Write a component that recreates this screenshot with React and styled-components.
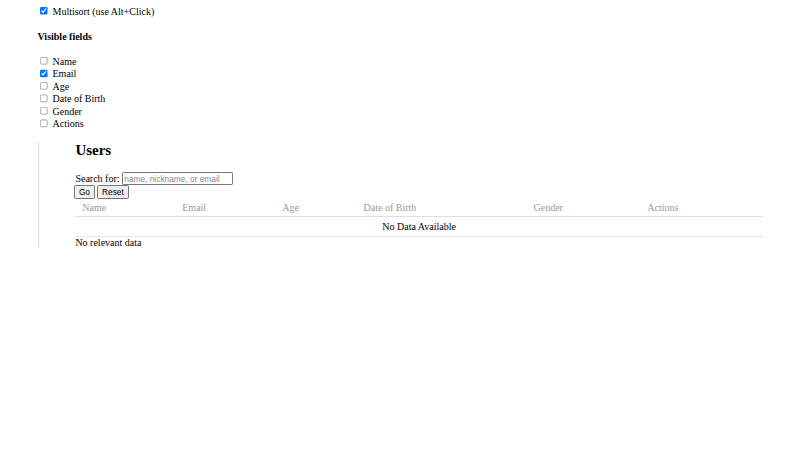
import React, { useState } from 'react'
import styled, { createGlobalStyle } from 'styled-components'

const GlobalStyle = createGlobalStyle`
  body {
    margin: 5px;
    font-family: "Liberation Serif", "Times New Roman", serif;
    font-size: 16px;
    color: #000;
    background: #fff;
  }
  input, button {
    font-family: "Liberation Sans", Arial, sans-serif;
  }
`

// the shot is a 1280px wide page shown at 800px, so the page is drawn at 0.625
const Page = styled.div`
  zoom: 0.625;
  padding: 0 52px;
`

const CheckRow = styled.div`
  height: 20px;
  display: flex;
  align-items: center;
  input {
    margin: 0 7px 0 4px;
    width: 13px;
    height: 13px;
  }
`

const FieldsTitle = styled.h4`
  font-size: 16px;
  font-weight: bold;
  margin: 21px 0;
`

const Panel = styled.div`
  margin-top: 20px;
  border-left: 1px solid #dcdcdc;
  padding-left: 59px;
`

const Title = styled.h2`
  font-size: 24px;
  font-weight: bold;
  margin: 0 0 20px;
  line-height: 28px;
`

const SearchRow = styled.div`
  height: 21px;
  display: flex;
  align-items: center;
  gap: 4px;
`

const SearchInput = styled.input`
  width: 177px;
  height: 21px;
  box-sizing: border-box;
  font-size: 13.33px;
  padding: 1px 2px;
  border: 1px solid #767676;
  border-radius: 2px;
  &::placeholder {
    color: #8a8a8a;
  }
`

const ButtonRow = styled.div`
  height: 21px;
  display: flex;
  align-items: center;
  gap: 4px;
  margin-left: -2px;
`

const Btn = styled.button`
  font-size: 13.33px;
  padding: 1px 6px;
  height: 21px;
  border: 1px solid #767676;
  border-radius: 2px;
  background: #efefef;
  color: #000;
`

const Table = styled.table`
  width: 100%;
  border-collapse: collapse;
  table-layout: fixed;
`

const HeadCell = styled.th`
  box-sizing: border-box;
  width: ${p => p.$w}px;
  text-align: left;
  font-weight: normal;
  color: #9a9a9a;
  padding: 5px 10px 5px 11px;
  line-height: 18px;
  border-bottom: 1px solid #dedede;
`

const EmptyCell = styled.td`
  text-align: center;
  padding: 6px 10px;
  line-height: 18px;
  border-bottom: 2px solid #e6e6e6;
`

const Note = styled.div`
  line-height: 18px;
`

const fields = [
  { name: 'Name', width: 160 },
  { name: 'Email', width: 160 },
  { name: 'Age', width: 130 },
  { name: 'Date of Birth', width: 272 },
  { name: 'Gender', width: 182 },
  { name: 'Actions', width: 196 },
]

const App = () => {
  const [multisort, setMultisort] = useState(true)
  const [visible, setVisible] = useState({ Email: true })
  const [search, setSearch] = useState('')

  const toggle = name => setVisible({ ...visible, [name]: !visible[name] })

  return (
    <Page>
      <GlobalStyle />
      <CheckRow>
        <input
          type="checkbox"
          checked={multisort}
          onChange={() => setMultisort(!multisort)}
        />
        Multisort (use Alt+Click)
      </CheckRow>

      <FieldsTitle>Visible fields</FieldsTitle>
      {fields.map(f => (
        <CheckRow key={f.name}>
          <input
            type="checkbox"
            checked={!!visible[f.name]}
            onChange={() => toggle(f.name)}
          />
          {f.name}
        </CheckRow>
      ))}

      <Panel>
        <Title>Users</Title>
        <SearchRow>
          Search for:
          <SearchInput
            value={search}
            onChange={e => setSearch(e.target.value)}
            placeholder="name, nickname, or email"
          />
        </SearchRow>
        <ButtonRow>
          <Btn>Go</Btn>
          <Btn onClick={() => setSearch('')}>Reset</Btn>
        </ButtonRow>
        <Table>
          <thead>
            <tr>
              {fields.map(f => (
                <HeadCell key={f.name} $w={f.width}>{f.name}</HeadCell>
              ))}
            </tr>
          </thead>
          <tbody>
            <tr>
              <EmptyCell colSpan={fields.length}>No Data Available</EmptyCell>
            </tr>
          </tbody>
        </Table>
        <Note>No relevant data</Note>
      </Panel>
    </Page>
  )
}

export default App
